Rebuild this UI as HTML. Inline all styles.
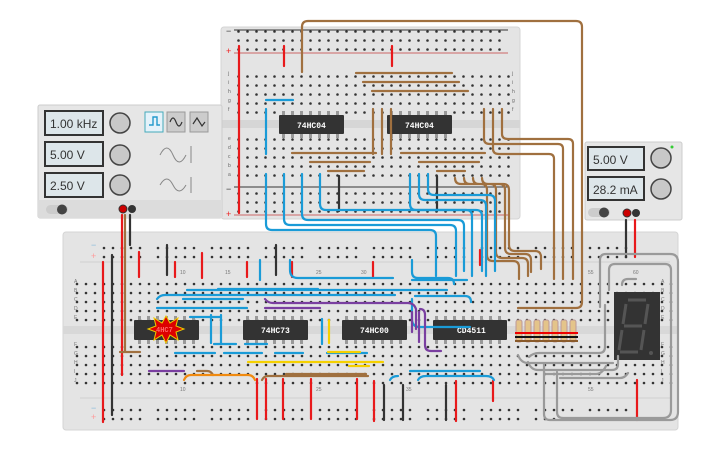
<!DOCTYPE html>
<html><head><style>
html,body{margin:0;padding:0;background:#fff;width:725px;height:453px;overflow:hidden}
svg{display:block}
text{font-family:"Liberation Sans",sans-serif}
text.m{font-family:"Liberation Mono",monospace;font-weight:bold}
</style></head><body>
<svg width="725" height="453" viewBox="0 0 725 453" xmlns="http://www.w3.org/2000/svg">
<defs>
<pattern id="dots" x="0" y="0" width="9" height="9" patternUnits="userSpaceOnUse">
<circle cx="4.5" cy="4.5" r="1.3" fill="#333"/></pattern>
<pattern id="dotsB" x="0.5" y="0.5" width="9" height="9" patternUnits="userSpaceOnUse">
<circle cx="4.5" cy="4.5" r="1.3" fill="#333"/></pattern>
<pattern id="pins" x="0" y="0" width="9" height="4" patternUnits="userSpaceOnUse">
<rect x="3" y="0" width="3" height="4" fill="#999"/></pattern>
</defs>

<!-- TOP BREADBOARD -->
<rect x="221" y="27" width="299" height="192" rx="3" fill="#e4e4e4" stroke="#d4d4d4"/>
<rect x="221" y="120" width="299" height="8" fill="#d6d6d6"/>
<line x1="234" y1="30" x2="508" y2="30" stroke="#333" stroke-width="1"/>
<line x1="234" y1="53" x2="508" y2="53" stroke="#c66" stroke-width="1"/>
<line x1="234" y1="187" x2="508" y2="187" stroke="#333" stroke-width="1"/>
<line x1="234" y1="215" x2="508" y2="215" stroke="#c66" stroke-width="1"/>
<text x="226" y="34" font-size="9" fill="#333">−</text><text x="226" y="54" font-size="9" fill="#e22">+</text>
<text x="226" y="192" font-size="9" fill="#333">−</text><text x="226" y="217" font-size="9" fill="#e22">+</text>
<rect x="234" y="30" width="270" height="21" fill="url(#dots)"/>
<rect x="234" y="69" width="279" height="45" fill="url(#dots)"/>
<rect x="234" y="134" width="279" height="45" fill="url(#dots)"/>
<rect x="234" y="188" width="270" height="25" fill="url(#dots)"/>
<g font-size="5" fill="#666">
<text x="228" y="75">j</text><text x="228" y="84">i</text><text x="228" y="93">h</text><text x="228" y="102">g</text><text x="228" y="111">f</text>
<text x="228" y="140">e</text><text x="228" y="149">d</text><text x="228" y="158">c</text><text x="228" y="167">b</text><text x="228" y="176">a</text>
<text x="512" y="75">j</text><text x="512" y="84">i</text><text x="512" y="93">h</text><text x="512" y="102">g</text><text x="512" y="111">f</text>
</g>
<rect x="279" y="111" width="65" height="4" fill="url(#pins)"/>
<rect x="279" y="134" width="65" height="4" fill="url(#pins)"/>
<rect x="387" y="111" width="65" height="4" fill="url(#pins)"/>
<rect x="387" y="134" width="65" height="4" fill="url(#pins)"/>
<rect x="279" y="115" width="65" height="19" fill="#333" rx="1"/>
<text class="m" x="297" y="128" font-size="8" fill="#fff">74HC04</text>
<rect x="387" y="115" width="65" height="19" fill="#333" rx="1"/>
<text class="m" x="405" y="128" font-size="8" fill="#fff">74HC04</text>

<!-- FUNCTION GENERATOR -->
<rect x="38" y="105" width="184" height="113" rx="2" fill="#e6e6e6" stroke="#ccc"/>
<rect x="38" y="200" width="184" height="18" fill="#dcdcdc"/>
<g stroke="#333" stroke-width="2" fill="#dde6ea">
<rect x="45" y="111" width="58" height="24"/><rect x="45" y="142" width="58" height="24"/><rect x="45" y="173" width="58" height="24"/>
</g>
<g font-size="12" fill="#333"><text x="50" y="128">1.00 kHz</text><text x="50" y="159">5.00 V</text><text x="50" y="190">2.50 V</text></g>
<g fill="#c8c8c8" stroke="#444" stroke-width="1.5"><circle cx="120" cy="123" r="10"/><circle cx="120" cy="155" r="10"/><circle cx="120" cy="185" r="10"/></g>
<rect x="145" y="112" width="18" height="20" fill="#e4f2fa" stroke="#4ab" stroke-width="1"/>
<path d="M149 125h4v-8h4v8h3" stroke="#29c" fill="none" stroke-width="1.4"/>
<rect x="167" y="112" width="18" height="20" fill="#ccc" stroke="#999"/>
<path d="M170 122q3-8 6 0t6 0" stroke="#333" fill="none" stroke-width="1.2"/>
<rect x="190" y="112" width="18" height="20" fill="#ccc" stroke="#999"/>
<path d="M193 124l4-6 5 8 3-4" stroke="#333" fill="none" stroke-width="1.2"/>
<path d="M160 155q7-14 13 0t13 0" stroke="#888" fill="none"/><line x1="191" y1="146" x2="191" y2="163" stroke="#888"/>
<path d="M160 185q7-12 13 0t13 0" stroke="#888" fill="none"/><line x1="191" y1="177" x2="191" y2="193" stroke="#888"/>
<rect x="46" y="205" width="22" height="9" rx="4.5" fill="#ccc"/><circle cx="62" cy="209.5" r="5" fill="#444"/>
<circle cx="123" cy="209" r="4" fill="#c00" stroke="#333"/><circle cx="132" cy="209" r="4" fill="#333"/>

<!-- POWER SUPPLY -->
<rect x="585" y="142" width="97" height="78" rx="2" fill="#e6e6e6" stroke="#ccc"/>
<g stroke="#333" stroke-width="2" fill="#dde6ea"><rect x="588" y="147" width="56" height="23"/><rect x="588" y="177" width="56" height="23"/></g>
<text x="593" y="164" font-size="12" fill="#333">5.00 V</text><text x="593" y="194" font-size="12" fill="#333">28.2 mA</text>
<g fill="#c8c8c8" stroke="#444" stroke-width="1.5"><circle cx="661" cy="158" r="10"/><circle cx="661" cy="189" r="10"/></g>
<circle cx="672" cy="147" r="1.5" fill="#3c3"/>
<rect x="588" y="208" width="22" height="9" rx="4.5" fill="#ccc"/><circle cx="604" cy="212.5" r="5" fill="#444"/>
<circle cx="627" cy="213" r="4" fill="#c00" stroke="#333"/><circle cx="636" cy="213" r="4" fill="#333"/>

<!-- BOTTOM BREADBOARD -->
<rect x="63" y="232" width="615" height="198" rx="3" fill="#e4e4e4" stroke="#d4d4d4"/>
<rect x="63" y="326" width="615" height="8" fill="#d8d8d8"/>
<line x1="80" y1="262" x2="670" y2="262" stroke="#d0d0d0"/>
<line x1="80" y1="398" x2="670" y2="398" stroke="#d0d0d0"/>
<text x="91" y="248" font-size="9" fill="#8bd">−</text><text x="91" y="259" font-size="9" fill="#f99">+</text>
<text x="91" y="411" font-size="9" fill="#8bd">−</text><text x="91" y="420" font-size="9" fill="#f99">+</text>
<g fill="url(#dotsB)">
<rect x="99" y="241" width="45" height="18"/><rect x="153" y="241" width="45" height="18"/><rect x="207" y="241" width="45" height="18"/><rect x="261" y="241" width="45" height="18"/><rect x="315" y="241" width="45" height="18"/><rect x="369" y="241" width="45" height="18"/><rect x="423" y="241" width="45" height="18"/><rect x="477" y="241" width="45" height="18"/><rect x="531" y="241" width="45" height="18"/><rect x="585" y="241" width="45" height="18"/>
<rect x="99" y="403" width="45" height="18"/><rect x="153" y="403" width="45" height="18"/><rect x="207" y="403" width="45" height="18"/><rect x="261" y="403" width="45" height="18"/><rect x="315" y="403" width="45" height="18"/><rect x="369" y="403" width="45" height="18"/><rect x="423" y="403" width="45" height="18"/><rect x="477" y="403" width="45" height="18"/><rect x="531" y="403" width="45" height="18"/><rect x="585" y="403" width="45" height="18"/>
<rect x="72" y="277" width="603" height="45"/>
<rect x="72" y="340" width="603" height="45"/>
</g>
<g font-size="5" fill="#777">
<text x="74" y="283">A</text><text x="74" y="292">B</text><text x="74" y="301">C</text><text x="74" y="310">D</text><text x="74" y="319">E</text>
<text x="74" y="346">F</text><text x="74" y="355">G</text><text x="74" y="364">H</text><text x="74" y="373">I</text><text x="74" y="382">J</text>
<text x="661" y="283">A</text><text x="661" y="292">B</text><text x="661" y="301">C</text><text x="661" y="310">D</text><text x="661" y="319">E</text>
<text x="661" y="346">F</text><text x="661" y="355">G</text><text x="661" y="364">H</text><text x="661" y="373">I</text><text x="661" y="382">J</text>
<text x="180" y="274">10</text><text x="225" y="274">15</text><text x="316" y="274">25</text><text x="361" y="274">30</text><text x="588" y="274">55</text><text x="633" y="274">60</text>
<text x="180" y="391">10</text><text x="316" y="391">25</text><text x="406" y="391">35</text><text x="588" y="391">55</text>
</g>
<!-- bottom ICs -->
<rect x="134" y="316" width="65" height="4" fill="url(#pins)"/><rect x="134" y="340" width="65" height="4" fill="url(#pins)"/>
<rect x="243" y="316" width="65" height="4" fill="url(#pins)"/><rect x="243" y="340" width="65" height="4" fill="url(#pins)"/>
<rect x="342" y="316" width="65" height="4" fill="url(#pins)"/><rect x="342" y="340" width="65" height="4" fill="url(#pins)"/>
<rect x="433" y="316" width="74" height="4" fill="url(#pins)"/><rect x="433" y="340" width="74" height="4" fill="url(#pins)"/>
<rect x="134" y="320" width="65" height="20" fill="#333" rx="1"/>
<polygon points="166,316 170,323 178,318 176,326 184,329 176,332 178,340 170,335 166,343 162,335 154,340 156,332 148,329 156,326 154,318 162,323" fill="#d00" stroke="#ec0" stroke-width="1"/>
<text class="m" x="156" y="332" font-size="7" fill="#f66">4HC7</text>
<rect x="243" y="320" width="65" height="20" fill="#333" rx="1"/>
<text class="m" x="261" y="333" font-size="8" fill="#fff">74HC73</text>
<rect x="342" y="320" width="65" height="20" fill="#333" rx="1"/>
<text class="m" x="360" y="333" font-size="8" fill="#fff">74HC00</text>
<rect x="433" y="320" width="74" height="20" fill="#333" rx="1"/>
<text class="m" x="457" y="333" font-size="8" fill="#fff">CD4511</text>
<!-- 7seg -->
<rect x="614" y="292" width="46" height="68" fill="#333"/>
<path d="M628 300h18M626 304l-3 20M648 304l-3 20M624 326h18M622 330l-3 20M644 330l-3 20M620 352h18" stroke="#555" stroke-width="3" fill="none"/>
<circle cx="651" cy="353" r="2" fill="#555"/>
<!-- resistors -->
<g fill="#e4c48a" stroke="#b99">
<rect x="516" y="320" width="6" height="22" rx="2"/><rect x="525" y="320" width="6" height="22" rx="2"/><rect x="534" y="320" width="6" height="22" rx="2"/><rect x="543" y="320" width="6" height="22" rx="2"/><rect x="552" y="320" width="6" height="22" rx="2"/><rect x="561" y="320" width="6" height="22" rx="2"/><rect x="570" y="320" width="6" height="22" rx="2"/>
</g>
<rect x="515" y="332" width="63" height="2" fill="#e00"/><rect x="515" y="336" width="63" height="2" fill="#111"/><rect x="515" y="340" width="63" height="2" fill="#8a5a2a"/>

<!-- WIRES -->
<g fill="none" stroke-width="2.2" stroke-linecap="round">
<g stroke="#e8191b">
<path d="M239 46v167M284 46v20M392 46v20M103 262v160M139 252v25M175 262v15M202 253v25M247 262v15M292 262v15M373 262v15M480 250v15M257 379v40M266 379v40M311 379v40M357 379v40M283 379v40M374 381v40M456 381v40M493 381v20M637 380v40M635 220v37"/>
<path d="M122 215v160"/>
</g>
<g stroke="#333">
<path d="M112 255v160M130 215v30M167 245v30M276 245v30M339 176v35M437 176v35M446 385v35M403 385v35M384 385v35M626 220v37"/>
</g>
<g stroke="#a0703f">
<path d="M302 72v-45q0-6 6-6h268q6 0 6 6v275q0 6-6 6h-58"/>
<path d="M356 73h96M363 82h96M372 91h96M373 109v45M382 109v45M391 109v45"/>
<path d="M292 153h84M310 162h60M328 171h36M401 153h84M419 162h60M437 171h28"/>
<path d="M484 109v30q0 5 6 5h68q5 0 5 5v130M493 109v40q0 5 6 5h50q5 0 5 5v120M502 109v25q0 5 6 5h60q5 0 5 5v135"/>
<path d="M455 178q0 6 6 6h20q6 0 6 6v65q0 6 6 6h20q6 0 6 6v12M464 178q0 6 6 6h20q6 0 6 6v62q0 6 6 6h20q6 0 6 6v12M473 178q0 6 6 6h20q6 0 6 6v58q0 6 6 6h14q6 0 6 6v12M482 178q0 6 6 6h15q6 0 6 6v55q0 6 6 6h20q6 0 6 6v12"/>
<path d="M125 215v137M120 352h20M197 371h10q4 0 6 4M262 380q2-4 6-4h100M286 374h80"/>
</g>
<g stroke="#1a9bd7">
<path d="M266 100h27M266 109v45"/>
<path d="M266 174v50q0 6 6 6h158q6 0 6 6v40M284 174v45q0 6 6 6h160q6 0 6 6v45M302 174v40q0 6 6 6h150q6 0 6 6v45M320 174v30q0 6 6 6h150q6 0 6 6v55"/>
<path d="M410 174v30q0 6 6 6h50q6 0 6 6v60M419 174v20q0 6 6 6h55q6 0 6 6v70M428 174v15q0 6 6 6h55q6 0 6 6v70"/>
<path d="M187 290h260M157 299q3-4 8-4h230M183 299h60M157 308h50M187 308h60M190 317h30M218 289h100M412 280h55M415 296h50q6 0 6 6M412 260v12q0 6 6 6h30q6 0 6 6M412 299v20q0 8 8 8h50"/>
<path d="M214 344h22M245 344h22M224 353h38M275 353h28M322 344v-25M211 343v-28M221 343v-28"/>
<path d="M175 353h40M290 260v10q0 8 8 8h95M260 260v20M327 353h40"/>
<path d="M410 371h70M418 380q2-4 8-4h60q6 0 8 4M390 380q2-4 8-4"/>
</g>
<g stroke="#7a3fa0">
<path d="M149 371h35M265 299q3 4 8 4h135q6 0 8 6v20M265 308h55M420 309q5 0 5 6v30q0 6 6 6h10M412 312v20M419 312v30"/>
</g>
<g stroke="#f5d000"><path d="M329 320v23M328 352h32M248 362h135M349 366h20"/></g>
<path d="M184 380q2-5 7-5h57q5 0 7 5" stroke="#f08a10"/>
<g stroke="#9a9a9a">
<path d="M600 307v-47q0-6 6-6h64q8 0 8 8v150q0 8-8 8h-120q-6 0-6-6v-50"/>
<path d="M609 290v-20q0-6 6-6h50q6 0 6 6v140q0 8-8 8h-100q-6 0-6-6v-40"/>
<path d="M622 285q0-6 6-6h8M605 305v42q0 6-6 6h-60q-6 0-10 4M518 355q3 8 10 8h85M528 362q3 8 10 8h74q6 0 6-6v-8M546 374h50q6 0 10-8M560 378h60q5 0 8-5"/>
</g>
</g>
</svg>
</body></html>
